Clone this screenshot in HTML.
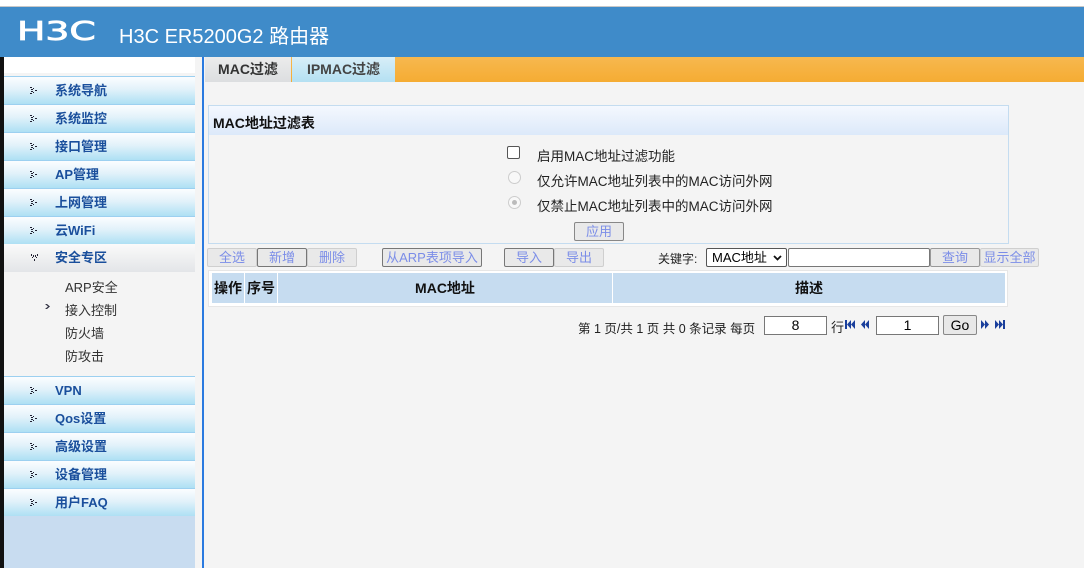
<!DOCTYPE html>
<html><head><meta charset="utf-8"><style>
*{margin:0;padding:0;box-sizing:border-box}
body{width:1084px;height:568px;overflow:hidden;background:#f4f4f4;font-family:"Liberation Sans","Noto Sans CJK SC",sans-serif;font-size:12px;position:relative}
.abs{position:absolute}
#top{left:0;top:0;width:1084px;height:7px;background:#fff;border-bottom:1px solid #c8c8c8}
#hdr{left:0;top:7px;width:1084px;height:50px;background:#3f8bc9;color:#fff}
#logo{left:17px;top:10px;font-size:26px;font-weight:normal;font-family:"DejaVu Sans",sans-serif;transform:scaleX(1.45);transform-origin:left;-webkit-text-stroke:0.8px #fff}
#title{left:119px;top:13px;font-size:20px}
#side{left:0;top:57px;width:204px;height:511px;background:#f4f4f4;border-right:2px solid #2a7ae0}
#sideL{left:0;top:57px;width:4px;height:511px;background:#111}
#sideW{left:4px;top:57px;width:191px;height:16px;background:#fff}
#sideB{left:4px;top:516px;width:191px;height:52px;background:#c8dcf0}
.mi{position:absolute;left:4px;width:191px;height:28px;background:linear-gradient(#fbfdff,#e2f2fa 45%,#aee0f4);border-top:1px solid #9cd0f0;color:#1a4f9c;font-weight:bold;font-size:13px;line-height:28px;padding-left:51px}
.mi.g{background:linear-gradient(#fafafa,#e3e5e8);border-top:none}
.mi svg{position:absolute;left:26px;top:10px}
.sub{position:absolute;left:65px;font-size:13px;color:#333}
#tabbar{left:205px;top:57px;width:879px;height:25px;background:linear-gradient(#f7b84f,#f5ac33)}
.tab{position:absolute;top:57px;height:25px;font-weight:bold;font-size:14px;line-height:25px;text-align:center;color:#333}
#panel{left:208px;top:105px;width:801px;height:139px;border:1px solid #c4dcf0;background:#f4f4f4}
#ptitle{left:209px;top:106px;width:799px;height:29px;background:linear-gradient(#f4f8fe,#dce9fa);font-weight:bold;font-size:14px;line-height:34px;padding-left:4px;color:#111}
.btn{position:absolute;height:19px;border:1px solid #cfcfcf;background:#e9e9e9;color:#7b8de8;font-size:13px;text-align:center;line-height:17px;border-radius:2px}
.btn.d{border-color:#777}
.row{position:absolute;left:537px;font-size:13.5px;color:#222}
#tbl{left:208px;top:270px;width:800px;height:37px;background:#fff;border:1px solid #e6e6e6}
.th{position:absolute;top:273px;height:30px;background:#c6dcf0;font-weight:bold;font-size:14px;line-height:30px;text-align:center;color:#111}
.inp{position:absolute;height:19px;border:1px solid #777;background:#fff;font-size:14px;text-align:center;line-height:17px}
</style></head><body>
<svg width="0" height="0" style="position:absolute"><defs><g id="dt" fill="#223"><rect x="0" y="0" width="2" height="1"/><rect x="3" y="1" width="1" height="1"/><rect x="1" y="2" width="2" height="1"/><rect x="5" y="3" width="2" height="1"/><rect x="1" y="4" width="2" height="1"/><rect x="3" y="5" width="1" height="1"/><rect x="0" y="6" width="2" height="1"/></g></defs></svg>
<div id="top" class="abs"></div>
<div id="hdr" class="abs"><div id="logo" class="abs">H3C</div><div id="title" class="abs">H3C ER5200G2 路由器</div></div>
<div id="side" class="abs"></div><div id="sideL" class="abs"></div><div id="sideW" class="abs"></div><div id="sideB" class="abs"></div>
<div class="mi" style="top:76px"><svg width="8" height="8"><use href="#dt"/></svg>系统导航</div>
<div class="mi" style="top:104px"><svg width="8" height="8"><use href="#dt"/></svg>系统监控</div>
<div class="mi" style="top:132px"><svg width="8" height="8"><use href="#dt"/></svg>接口管理</div>
<div class="mi" style="top:160px"><svg width="8" height="8"><use href="#dt"/></svg>AP管理</div>
<div class="mi" style="top:188px"><svg width="8" height="8"><use href="#dt"/></svg>上网管理</div>
<div class="mi" style="top:216px"><svg width="8" height="8"><use href="#dt"/></svg>云WiFi</div>
<div class="mi g" style="top:244px"><svg width="8" height="8" style="transform:rotate(90deg)"><use href="#dt"/></svg>安全专区</div>
<div class="sub" style="top:277px">ARP安全</div>
<div class="sub" style="top:300px">接入控制</div><svg class="abs" style="left:45px;top:304px" width="6" height="5"><path d="M0 0h2l3 2.5-3 2.5h-2l3-2.5z" fill="#334"/></svg>
<div class="sub" style="top:323px">防火墙</div>
<div class="sub" style="top:346px">防攻击</div>
<div class="mi" style="top:376px"><svg width="8" height="8"><use href="#dt"/></svg>VPN</div>
<div class="mi" style="top:404px"><svg width="8" height="8"><use href="#dt"/></svg>Qos设置</div>
<div class="mi" style="top:432px"><svg width="8" height="8"><use href="#dt"/></svg>高级设置</div>
<div class="mi" style="top:460px"><svg width="8" height="8"><use href="#dt"/></svg>设备管理</div>
<div class="mi" style="top:488px"><svg width="8" height="8"><use href="#dt"/></svg>用户FAQ</div>
<div id="tabbar" class="abs"></div>
<div class="tab" style="left:205px;width:86px;background:linear-gradient(#ececec,#dcdee0)">MAC过滤</div>
<div class="tab" style="left:292px;width:103px;background:linear-gradient(#d8eef8,#b4e0f2);color:#444">IPMAC过滤</div>
<div id="panel" class="abs"></div>
<div id="ptitle" class="abs">MAC地址过滤表</div>
<div class="abs" style="left:507px;top:146px;width:13px;height:13px;border:1px solid #555;border-radius:2px;background:#fff"></div>
<div class="row" style="top:145px">启用MAC地址过滤功能</div>
<div class="abs" style="left:508px;top:171px;width:13px;height:13px;border:1px solid #ccc;border-radius:50%;background:#f8f8f8"></div>
<div class="row" style="top:170px">仅允许MAC地址列表中的MAC访问外网</div>
<div class="abs" style="left:508px;top:196px;width:13px;height:13px;border:1px solid #ccc;border-radius:50%;background:#f8f8f8"><div style="margin:3px;width:5px;height:5px;border-radius:50%;background:#bbb"></div></div>
<div class="row" style="top:195px">仅禁止MAC地址列表中的MAC访问外网</div>
<div class="btn d" style="left:574px;top:222px;width:50px;border-color:#888">应用</div>
<div class="btn" style="left:207px;top:248px;width:50px">全选</div>
<div class="btn d" style="left:257px;top:248px;width:50px">新增</div>
<div class="btn" style="left:307px;top:248px;width:50px">删除</div>
<div class="btn d" style="left:382px;top:248px;width:100px">从ARP表项导入</div>
<div class="btn d" style="left:504px;top:248px;width:50px">导入</div>
<div class="btn" style="left:554px;top:248px;width:50px">导出</div>
<div class="abs" style="left:658px;top:250px;font-size:12px;color:#222">关键字:</div>
<div class="abs" style="left:706px;top:248px;width:81px;height:19px;border:1px solid #555;border-radius:2px;background:#fff;font-size:13px;line-height:17px;padding-left:5px">MAC地址<svg style="position:absolute;right:4px;top:6px" width="9" height="6"><path d="M1 1l3.5 3.5L8 1" stroke="#111" stroke-width="1.8" fill="none"/></svg></div>
<div class="abs" style="left:788px;top:248px;width:142px;height:19px;border:1px solid #777;border-radius:2px;background:#fff"></div>
<div class="btn d" style="left:930px;top:248px;width:50px;border-color:#999">查询</div>
<div class="btn" style="left:980px;top:248px;width:59px">显示全部</div>
<div id="tbl" class="abs"></div>
<div class="th" style="left:212px;width:32px">操作</div>
<div class="th" style="left:245px;width:32px">序号</div>
<div class="th" style="left:278px;width:334px">MAC地址</div>
<div class="th" style="left:613px;width:392px">描述</div>
<div class="abs" style="left:578px;top:318px;font-size:12.5px;color:#222">第 1 页/共 1 页 共 0 条记录 每页</div>
<div class="inp" style="left:764px;top:316px;width:63px">8</div>
<div class="abs" style="left:831px;top:317px;font-size:13px;color:#222">行</div>
<svg class="abs" style="left:845px;top:320px" width="30" height="9"><g fill="#1a3f9c"><rect x="0" y="0" width="2" height="9"/><path d="M2 4.5L6 0v9zM6 4.5L10 0v9z"/><path d="M16 4.5L20 0v9zM20 4.5L24 0v9z"/></g></svg>
<div class="inp" style="left:876px;top:316px;width:63px">1</div>
<div class="abs" style="left:943px;top:315px;width:34px;height:20px;border:1px solid #888;border-radius:2px;background:#e8e8e8;font-size:14px;text-align:center;line-height:18px">Go</div>
<svg class="abs" style="left:981px;top:320px" width="30" height="9"><g fill="#1a3f9c"><path d="M0 0l4 4.5L0 9zM4 0l4 4.5L4 9z"/><path d="M14 0l4 4.5L14 9zM18 0l4 4.5L18 9z"/><rect x="22" y="0" width="2" height="9"/></g></svg>
</body></html>
